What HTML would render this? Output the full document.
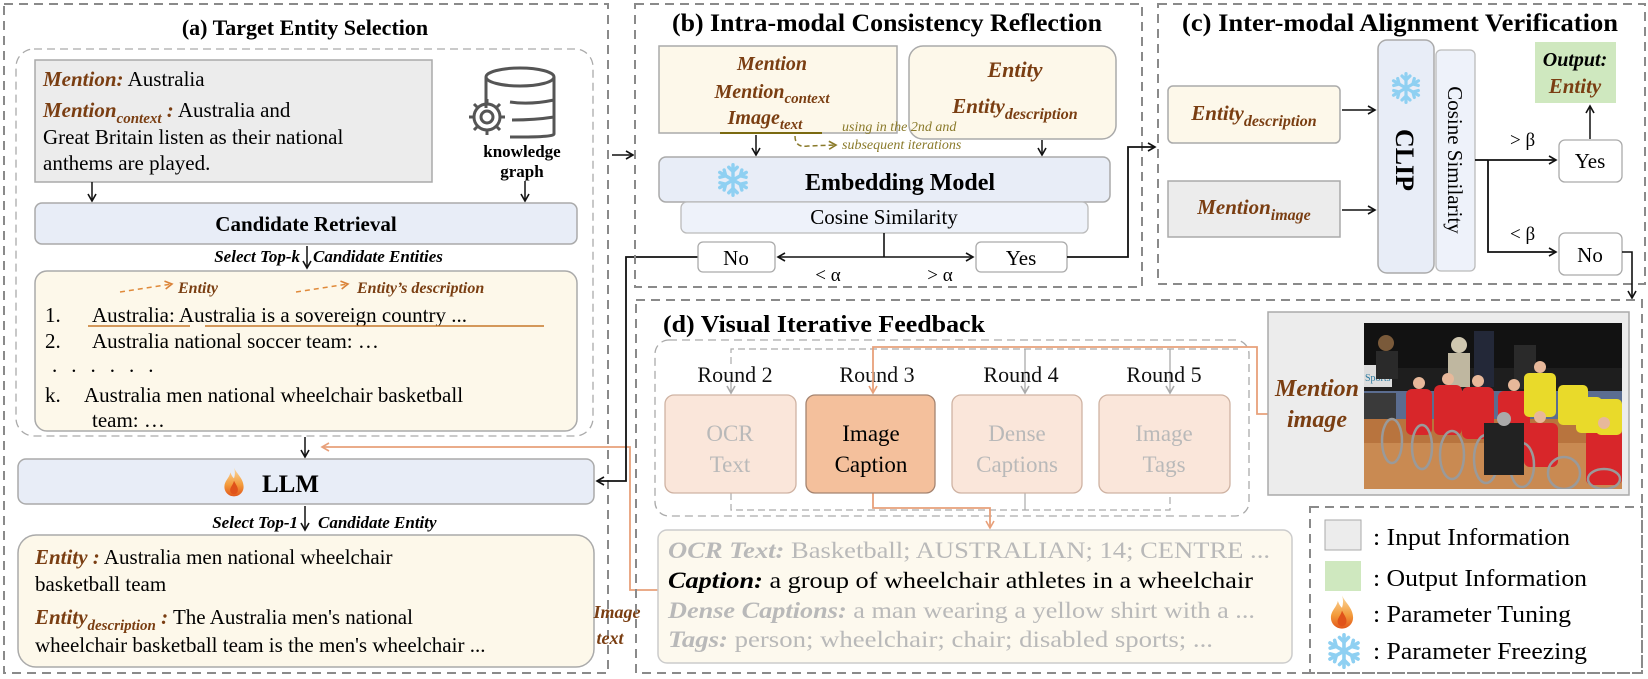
<!DOCTYPE html>
<html><head><meta charset="utf-8"><style>
html,body{margin:0;padding:0;background:#fff;width:1648px;height:679px;overflow:hidden}
svg{display:block}
text{font-family:"Liberation Serif",serif;}
.b{font-weight:bold}
.br{fill:#7a3e12;font-style:italic;font-weight:bold}
.g{fill:#b9b9b9}
</style></head><body>
<svg width="1648" height="679" viewBox="0 0 1648 679" xmlns="http://www.w3.org/2000/svg">
<defs>
<marker id="ak" markerWidth="10" markerHeight="10" refX="8" refY="5" orient="auto" markerUnits="userSpaceOnUse"><path d="M1,1 L8,5 L1,9" fill="none" stroke="#111" stroke-width="1.6"/></marker>
<marker id="ao" markerWidth="10" markerHeight="10" refX="8" refY="5" orient="auto" markerUnits="userSpaceOnUse"><path d="M1,1 L8,5 L1,9" fill="none" stroke="#e8a07a" stroke-width="1.6"/></marker>
<marker id="ag" markerWidth="10" markerHeight="10" refX="8" refY="5" orient="auto" markerUnits="userSpaceOnUse"><path d="M1,1 L8,5 L1,9" fill="none" stroke="#aaa" stroke-width="1.6"/></marker>
<marker id="ay" markerWidth="10" markerHeight="10" refX="8" refY="5" orient="auto" markerUnits="userSpaceOnUse"><path d="M1,1 L8,5 L1,9" fill="none" stroke="#8a7a2a" stroke-width="1.6"/></marker>
<marker id="ar" markerWidth="10" markerHeight="10" refX="8" refY="5" orient="auto" markerUnits="userSpaceOnUse"><path d="M1,1 L8,5 L1,9" fill="none" stroke="#d9823a" stroke-width="1.6"/></marker>
<linearGradient id="fl" x1="0" y1="0" x2="0" y2="1"><stop offset="0" stop-color="#fbd9a0"/><stop offset="0.6" stop-color="#f39a3a"/><stop offset="1" stop-color="#e2561a"/></linearGradient>
<symbol id="snow" viewBox="-10 -10 20 20"><g stroke="#8fd0f2" stroke-width="2" stroke-linecap="round" fill="none">
<path d="M0,-9V9M-7.8,-4.5L7.8,4.5M-7.8,4.5L7.8,-4.5"/>
<path d="M-2.5,-7.5L0,-5L2.5,-7.5M-2.5,7.5L0,5L2.5,7.5M-7.7,-1.6L-4.3,-2.5L-5.2,-5.9M7.7,1.6L4.3,2.5L5.2,5.9M-7.7,1.6L-4.3,2.5L-5.2,5.9M7.7,-1.6L4.3,-2.5L5.2,-5.9"/></g></symbol>
<symbol id="flame" viewBox="0 0 20 26"><path d="M10,1 C12,6 18,10 18,17 C18,22 14,25 10,25 C6,25 2,22 2,17 C2,12 6,10 7,5 C8,8 9,9 10,10 C11,7 11,4 10,1Z" fill="url(#fl)"/><path d="M10,12 C12,16 14,18 13,21 C12,24 8,24 7,21 C6,18 9,16 10,12Z" fill="#e0521a"/></symbol>
</defs>

<!-- ================= Panel A ================= -->
<rect x="4" y="4" width="604" height="669" fill="none" stroke="#8a8a8a" stroke-width="2" stroke-dasharray="9,6"/>
<text x="305" y="35" text-anchor="middle" class="b" font-size="22">(a) Target Entity Selection</text>
<rect x="16" y="49" width="577" height="387" rx="18" fill="none" stroke="#aaa" stroke-width="1.3" stroke-dasharray="8,5"/>
<rect x="35" y="60" width="397" height="122" fill="#ececec" stroke="#aaa" stroke-width="1.5"/>
<text x="43" y="86" font-size="21"><tspan class="br">Mention:</tspan> Australia</text>
<text x="43" y="117" font-size="21"><tspan class="br">Mention</tspan><tspan class="br" font-size="15" dy="6">context</tspan><tspan class="br" dy="-6"> :</tspan> Australia and</text>
<text x="43" y="144" font-size="21">Great Britain listen as their national</text>
<text x="43" y="170" font-size="21">anthems are played.</text>
<g fill="none" stroke="#555" stroke-width="3">
<ellipse cx="520" cy="77" rx="34" ry="9"/>
<path d="M486,77 V108 M554,77 V134 Q554,137 520,137 L510,137 M510,102 Q530,105 554,100 M512,120 Q535,120 554,117"/>
<circle cx="487" cy="117" r="6"/>
<path d="M487,99 V105 M487,129 V135 M469,117 H475 M499,117 H505 M474,104 L478,108 M496,126 L500,130 M474,130 L478,126 M496,108 L500,104"/>
<circle cx="487" cy="117" r="13"/>
</g>
<text x="522" y="157" text-anchor="middle" class="b" font-size="17">knowledge</text>
<text x="522" y="177" text-anchor="middle" class="b" font-size="17">graph</text>
<line x1="92" y1="182" x2="92" y2="201" stroke="#111" stroke-width="1.5" marker-end="url(#ak)"/>
<line x1="525" y1="181" x2="525" y2="201" stroke="#111" stroke-width="1.5" marker-end="url(#ak)"/>
<rect x="35" y="203" width="542" height="41" rx="7" fill="#e8edf7" stroke="#aaa" stroke-width="1.5"/>
<text x="306" y="231" text-anchor="middle" class="b" font-size="21">Candidate Retrieval</text>
<text x="300" y="262" text-anchor="end" class="b" font-style="italic" font-size="17">Select Top-k</text>
<line x1="307" y1="246" x2="307" y2="268" stroke="#111" stroke-width="1.5" marker-end="url(#ak)"/>
<text x="313" y="262" class="b" font-style="italic" font-size="17">Candidate Entities</text>
<rect x="35" y="271" width="542" height="160" rx="12" fill="#fdf8ea" stroke="#aaa" stroke-width="1.5"/>
<path d="M120,292 L172,284" stroke="#e08a3a" stroke-width="1.5" stroke-dasharray="5,4" fill="none" marker-end="url(#ar)"/>
<text x="178" y="293" class="br" font-size="16">Entity</text>
<path d="M296,292 L348,284" stroke="#e08a3a" stroke-width="1.5" stroke-dasharray="5,4" fill="none" marker-end="url(#ar)"/>
<text x="357" y="293" class="br" font-size="16">Entity’s description</text>
<text x="45" y="322" font-size="21">1.</text>
<text x="92" y="322" font-size="21">Australia: Australia is a sovereign country ...</text>
<line x1="88" y1="326" x2="190" y2="326" stroke="#c7782a" stroke-width="1.6"/>
<line x1="205" y1="326" x2="544" y2="326" stroke="#c7782a" stroke-width="1.6"/>
<text x="45" y="348" font-size="21">2.</text>
<text x="92" y="348" font-size="21">Australia national soccer team: …</text>
<text x="52" y="372" font-size="21" letter-spacing="14">......</text>
<text x="45" y="402" font-size="21">k.</text>
<text x="84" y="402" font-size="21">Australia men national wheelchair basketball</text>
<text x="92" y="427" font-size="21">team: …</text>
<line x1="305" y1="437" x2="305" y2="457" stroke="#111" stroke-width="1.5" marker-end="url(#ak)"/>
<rect x="18" y="459" width="576" height="45" rx="8" fill="#e8edf7" stroke="#aaa" stroke-width="1.5"/>
<use href="#flame" x="222" y="466" width="24" height="32"/>
<text x="262" y="492" class="b" font-size="25">LLM</text>
<text x="298" y="528" text-anchor="end" class="b" font-style="italic" font-size="17">Select  Top-1</text>
<line x1="305" y1="506" x2="305" y2="530" stroke="#111" stroke-width="1.5" marker-end="url(#ak)"/>
<text x="318" y="528" class="b" font-style="italic" font-size="17">Candidate Entity</text>
<rect x="18" y="535" width="576" height="132" rx="18" fill="#fdf8ea" stroke="#aaa" stroke-width="1.5"/>
<text x="35" y="564" font-size="21"><tspan class="br">Entity :</tspan> Australia men national wheelchair</text>
<text x="35" y="591" font-size="21">basketball team</text>
<text x="35" y="624" font-size="21"><tspan class="br">Entity</tspan><tspan class="br" font-size="15" dy="6">description</tspan><tspan class="br" dy="-6"> :</tspan> The Australia men's national</text>
<text x="35" y="652" font-size="21">wheelchair basketball team is the men's wheelchair ...</text>

<path d="M658,590 H630 V447 H322" fill="none" stroke="#e8a07a" stroke-width="1.8" marker-end="url(#ao)"/>
<text x="617" y="618" text-anchor="middle" class="br" font-size="18">Image</text>
<text x="610" y="644" text-anchor="middle" class="br" font-size="18">text</text>
<path d="M698,257 H626 V481 H597" fill="none" stroke="#111" stroke-width="1.8" marker-end="url(#ak)"/>
<line x1="612" y1="155" x2="633" y2="155" stroke="#111" stroke-width="1.5" marker-end="url(#ak)"/>

<!-- ================= Panel B ================= -->
<rect x="635" y="4" width="507" height="283" fill="none" stroke="#8a8a8a" stroke-width="2" stroke-dasharray="9,6"/>
<text x="887" y="31" text-anchor="middle" class="b" font-size="25" textLength="430" lengthAdjust="spacingAndGlyphs">(b) Intra-modal Consistency Reflection</text>
<rect x="659" y="46" width="238" height="87" fill="#fdf8ea" stroke="#aaa" stroke-width="1.5"/>
<text x="772" y="70" text-anchor="middle" class="br" font-size="20">Mention</text>
<text x="772" y="98" text-anchor="middle" class="br" font-size="20">Mention<tspan font-size="15" dy="5">context</tspan></text>
<text x="765" y="124" text-anchor="middle" class="br" font-size="20">Image<tspan font-size="15" dy="5">text</tspan></text>
<line x1="720" y1="133" x2="822" y2="133" stroke="#7a6a10" stroke-width="2"/>
<rect x="909" y="46" width="207" height="93" rx="14" fill="#fdf8ea" stroke="#aaa" stroke-width="1.5"/>
<text x="1015" y="77" text-anchor="middle" class="br" font-size="22">Entity</text>
<text x="1015" y="113" text-anchor="middle" class="br" font-size="21">Entity<tspan font-size="16" dy="6">description</tspan></text>
<path d="M795,136 Q795,148 808,146 L836,145" fill="none" stroke="#8a7a2a" stroke-width="1.5" stroke-dasharray="5,3" marker-end="url(#ay)"/>
<text x="842" y="131" fill="#8a7a2a" font-style="italic" font-size="14">using in the 2nd and</text>
<text x="842" y="149" fill="#8a7a2a" font-style="italic" font-size="14">subsequent iterations</text>
<line x1="756" y1="135" x2="756" y2="155" stroke="#111" stroke-width="1.5" marker-end="url(#ak)"/>
<line x1="1042" y1="140" x2="1042" y2="155" stroke="#111" stroke-width="1.5" marker-end="url(#ak)"/>
<rect x="659" y="157" width="451" height="45" rx="7" fill="#e8edf7" stroke="#aaa" stroke-width="1.5"/>
<use href="#snow" x="716" y="163" width="34" height="34"/>
<text x="900" y="190" text-anchor="middle" class="b" font-size="24">Embedding Model</text>
<rect x="681" y="202" width="407" height="31" rx="6" fill="#eef2fa" stroke="#bbb" stroke-width="1.3"/>
<text x="884" y="224" text-anchor="middle" font-size="21">Cosine Similarity</text>
<line x1="884" y1="233" x2="884" y2="257" stroke="#111" stroke-width="1.6"/>
<line x1="884" y1="257" x2="778" y2="257" stroke="#111" stroke-width="1.6" marker-end="url(#ak)"/>
<line x1="884" y1="257" x2="973" y2="257" stroke="#111" stroke-width="1.6" marker-end="url(#ak)"/>
<rect x="698" y="242" width="77" height="30" rx="5" fill="#fff" stroke="#aaa" stroke-width="1.3"/>
<text x="736" y="265" text-anchor="middle" font-size="21">No</text>
<rect x="976" y="242" width="91" height="30" rx="5" fill="#fff" stroke="#aaa" stroke-width="1.3"/>
<text x="1021" y="265" text-anchor="middle" font-size="21">Yes</text>
<text x="828" y="281" text-anchor="middle" font-size="19">&lt; α</text>
<text x="940" y="281" text-anchor="middle" font-size="19">&gt; α</text>
<path d="M1067,257 H1128 V147 H1155" fill="none" stroke="#111" stroke-width="1.8" marker-end="url(#ak)"/>

<!-- ================= Panel C ================= -->
<rect x="1158" y="4" width="487" height="280" fill="none" stroke="#8a8a8a" stroke-width="2" stroke-dasharray="9,6"/>
<text x="1400" y="31" text-anchor="middle" class="b" font-size="25" textLength="436" lengthAdjust="spacingAndGlyphs">(c) Inter-modal Alignment Verification</text>
<rect x="1168" y="86" width="172" height="57" rx="5" fill="#fdf8ea" stroke="#aaa" stroke-width="1.5"/>
<text x="1254" y="120" text-anchor="middle" class="br" font-size="21">Entity<tspan font-size="16" dy="6">description</tspan></text>
<rect x="1168" y="181" width="172" height="56" fill="#ececec" stroke="#aaa" stroke-width="1.5"/>
<text x="1254" y="214" text-anchor="middle" class="br" font-size="21">Mention<tspan font-size="16" dy="6">image</tspan></text>
<line x1="1342" y1="110" x2="1375" y2="110" stroke="#111" stroke-width="1.6" marker-end="url(#ak)"/>
<line x1="1342" y1="210" x2="1375" y2="210" stroke="#111" stroke-width="1.6" marker-end="url(#ak)"/>
<rect x="1378" y="40" width="56" height="233" rx="9" fill="#e8edf7" stroke="#aaa" stroke-width="1.5"/>
<use href="#snow" x="1390" y="72" width="32" height="32"/>
<text transform="translate(1396,160) rotate(90)" text-anchor="middle" class="b" font-size="26">CLIP</text>
<rect x="1436" y="50" width="39" height="221" rx="5" fill="#eef2fa" stroke="#bbb" stroke-width="1.3"/>
<text transform="translate(1448,160) rotate(90)" text-anchor="middle" font-size="21">Cosine Similarity</text>
<rect x="1535" y="42" width="81" height="61" fill="#cfe8bf"/>
<text x="1575" y="66" text-anchor="middle" class="b" font-style="italic" font-size="20">Output:</text>
<text x="1575" y="93" text-anchor="middle" class="br" font-size="21">Entity</text>
<line x1="1475" y1="160" x2="1488" y2="160" stroke="#111" stroke-width="1.8"/>
<line x1="1488" y1="160" x2="1556" y2="160" stroke="#111" stroke-width="1.8" marker-end="url(#ak)"/>
<path d="M1488,160 V252 H1556" fill="none" stroke="#111" stroke-width="1.8" marker-end="url(#ak)"/>
<text x="1510" y="146" font-size="19">&gt; β</text>
<text x="1510" y="240" font-size="19">&lt; β</text>
<rect x="1559" y="140" width="63" height="42" rx="6" fill="#fff" stroke="#aaa" stroke-width="1.3"/>
<text x="1590" y="168" text-anchor="middle" font-size="21">Yes</text>
<line x1="1590" y1="139" x2="1590" y2="106" stroke="#111" stroke-width="1.5" marker-end="url(#ak)"/>
<rect x="1559" y="233" width="63" height="42" rx="6" fill="#fff" stroke="#aaa" stroke-width="1.3"/>
<text x="1590" y="262" text-anchor="middle" font-size="21">No</text>
<path d="M1622,252 H1632 V298" fill="none" stroke="#111" stroke-width="1.6" marker-end="url(#ak)"/>

<!-- ================= Panel D ================= -->
<rect x="636" y="300" width="1006" height="373" fill="none" stroke="#8a8a8a" stroke-width="2" stroke-dasharray="9,6"/>
<text x="824" y="332" text-anchor="middle" class="b" font-size="24" textLength="322" lengthAdjust="spacingAndGlyphs">(d) Visual Iterative Feedback</text>
<rect x="655" y="340" width="594" height="176" rx="14" fill="none" stroke="#aaa" stroke-width="1.3" stroke-dasharray="8,5"/>
<path d="M731,364 V349 H1238" fill="none" stroke="#aaa" stroke-width="1.2" stroke-dasharray="7,4"/>
<path d="M731,493 V510 H1170 V493" fill="none" stroke="#aaa" stroke-width="1.2" stroke-dasharray="7,4"/>
<line x1="1025" y1="493" x2="1025" y2="510" stroke="#aaa" stroke-width="1.2"/>
<line x1="731" y1="380" x2="731" y2="393" stroke="#aaa" stroke-width="1.3" marker-end="url(#ag)"/>
<line x1="1025" y1="349" x2="1025" y2="393" stroke="#aaa" stroke-width="1.3" marker-end="url(#ag)"/>
<line x1="1170" y1="349" x2="1170" y2="393" stroke="#aaa" stroke-width="1.3" marker-end="url(#ag)"/>
<text x="735" y="382" text-anchor="middle" font-size="22" fill="#111">Round 2</text>
<text x="877" y="382" text-anchor="middle" font-size="22" fill="#111">Round 3</text>
<text x="1021" y="382" text-anchor="middle" font-size="22" fill="#111">Round 4</text>
<text x="1164" y="382" text-anchor="middle" font-size="22" fill="#111">Round 5</text>
<path d="M1268,414 H1257 V347 H873 V393" fill="none" stroke="#e8a07a" stroke-width="1.8" marker-end="url(#ao)"/>
<path d="M873,493 V508 H990 V528" fill="none" stroke="#e8a07a" stroke-width="1.8" marker-end="url(#ao)"/>
<rect x="665" y="395" width="131" height="98" rx="9" fill="#fae6da" stroke="#cfb3a3" stroke-width="1.3"/>
<text x="730" y="441" text-anchor="middle" class="g" font-size="23">OCR</text>
<text x="730" y="472" text-anchor="middle" class="g" font-size="23">Text</text>
<rect x="806" y="395" width="129" height="98" rx="9" fill="#f4c09c" stroke="#a58470" stroke-width="1.3"/>
<text x="871" y="441" text-anchor="middle" font-size="23">Image</text>
<text x="871" y="472" text-anchor="middle" font-size="23">Caption</text>
<rect x="952" y="395" width="130" height="98" rx="9" fill="#fae6da" stroke="#cfb3a3" stroke-width="1.3"/>
<text x="1017" y="441" text-anchor="middle" class="g" font-size="23">Dense</text>
<text x="1017" y="472" text-anchor="middle" class="g" font-size="23">Captions</text>
<rect x="1099" y="395" width="131" height="98" rx="9" fill="#fae6da" stroke="#cfb3a3" stroke-width="1.3"/>
<text x="1164" y="441" text-anchor="middle" class="g" font-size="23">Image</text>
<text x="1164" y="472" text-anchor="middle" class="g" font-size="23">Tags</text>
<rect x="1268" y="312" width="361" height="183" fill="#ececec" stroke="#aaa" stroke-width="1.5"/>
<text x="1317" y="396" text-anchor="middle" class="br" font-size="24">Mention</text>
<text x="1317" y="427" text-anchor="middle" class="br" font-size="24">image</text>
<svg x="1364" y="323" width="258" height="166" viewBox="0 0 258 166">
<rect width="258" height="166" fill="#b8743e"/>
<rect width="258" height="70" fill="#121212"/>
<rect y="45" width="258" height="25" fill="#1e1e1e"/>
<rect x="0" y="42" width="28" height="22" fill="#ddd"/><text x="1" y="58" font-size="10" fill="#2a7aa0" font-family="Liberation Sans">Sports</text>
<rect y="68" width="258" height="28" fill="#5b6d90"/><rect y="70" width="32" height="26" fill="#3a3a3a"/>
<rect y="120" width="258" height="46" fill="#c98a52"/>
<circle cx="22" cy="20" r="8" fill="#7a5a3a"/><rect x="12" y="28" width="22" height="28" fill="#2a2a2a"/>
<circle cx="95" cy="22" r="8" fill="#cfc7b0"/><rect x="84" y="30" width="22" height="34" fill="#bfb7a0"/>
<rect x="110" y="8" width="20" height="56" fill="#232838"/><rect x="150" y="22" width="22" height="44" fill="#2a2a2a"/>
<g fill="#d8262a">
<rect x="42" y="66" width="26" height="46" rx="6"/><rect x="70" y="62" width="28" height="50" rx="6"/><rect x="98" y="64" width="32" height="52" rx="6"/><rect x="134" y="68" width="32" height="52" rx="6"/><rect x="160" y="100" width="34" height="44" rx="6"/><rect x="222" y="106" width="36" height="56" rx="6"/>
</g>
<g fill="#e9da2a"><rect x="160" y="50" width="32" height="44" rx="5"/><rect x="194" y="62" width="30" height="40" rx="5"/><rect x="212" y="74" width="26" height="36" rx="5"/><rect x="232" y="76" width="26" height="36" rx="5"/></g>
<g fill="#e7b89a"><circle cx="55" cy="60" r="6"/><circle cx="84" cy="56" r="6"/><circle cx="114" cy="58" r="6"/><circle cx="150" cy="62" r="6"/><circle cx="176" cy="44" r="6"/><circle cx="176" cy="94" r="6"/><circle cx="240" cy="100" r="6"/></g>
<g fill="none" stroke="#9a9a9a" stroke-width="2.5"><ellipse cx="28" cy="118" rx="10" ry="22"/><ellipse cx="58" cy="124" rx="10" ry="22"/><ellipse cx="88" cy="132" rx="12" ry="24"/><ellipse cx="122" cy="136" rx="12" ry="24"/><ellipse cx="158" cy="142" rx="12" ry="22"/><ellipse cx="200" cy="150" rx="16" ry="16"/><ellipse cx="240" cy="156" rx="16" ry="10"/></g>
<rect x="120" y="100" width="40" height="52" fill="#222"/><circle cx="140" cy="96" r="7" fill="#aaa"/>
</svg>
<rect x="658" y="530" width="634" height="133" rx="9" fill="#fdf9ee" stroke="#ccc" stroke-width="1.5"/>
<text x="668" y="558" font-size="23" class="g" textLength="602" lengthAdjust="spacingAndGlyphs"><tspan font-style="italic" font-weight="bold">OCR Text:</tspan> Basketball; AUSTRALIAN; 14; CENTRE ...</text>
<text x="668" y="588" font-size="23" textLength="585" lengthAdjust="spacingAndGlyphs"><tspan font-style="italic" font-weight="bold">Caption:</tspan> a group of wheelchair athletes in a wheelchair</text>
<text x="668" y="618" font-size="23" class="g" textLength="587" lengthAdjust="spacingAndGlyphs"><tspan font-style="italic" font-weight="bold">Dense Captions:</tspan> a man wearing a yellow shirt with a ...</text>
<text x="668" y="647" font-size="23" class="g" textLength="545" lengthAdjust="spacingAndGlyphs"><tspan font-style="italic" font-weight="bold">Tags:</tspan> person; wheelchair; chair; disabled sports;  ...</text>
<rect x="1310" y="507" width="332" height="166" fill="none" stroke="#8a8a8a" stroke-width="2" stroke-dasharray="9,6"/>
<rect x="1325" y="520" width="36" height="30" fill="#ececec" stroke="#aaa"/>
<text x="1373" y="545" font-size="24" textLength="197" lengthAdjust="spacingAndGlyphs">: Input Information</text>
<rect x="1325" y="561" width="36" height="30" fill="#cfe8bf"/>
<text x="1373" y="586" font-size="24" textLength="214" lengthAdjust="spacingAndGlyphs">: Output Information</text>
<use href="#flame" x="1327" y="594" width="30" height="36"/>
<text x="1373" y="622" font-size="24" textLength="198" lengthAdjust="spacingAndGlyphs">: Parameter Tuning</text>
<use href="#snow" x="1326" y="633" width="36" height="36"/>
<text x="1373" y="659" font-size="24" textLength="214" lengthAdjust="spacingAndGlyphs">: Parameter Freezing</text>
</svg>
</body></html>
